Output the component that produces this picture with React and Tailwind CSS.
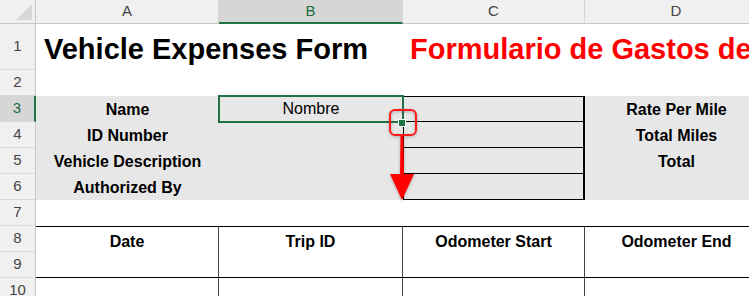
import React from 'react'

const LEFT = ['Name', 'ID Number', 'Vehicle Description', 'Authorized By']
const RIGHT = ['Rate Per Mile', 'Total Miles', 'Total', '']
const COLS = ['A', 'B', 'C', 'D']
const TABLE = ['Date', 'Trip ID', 'Odometer Start', 'Odometer End']

function RowHead({ n, row, active }) {
  return (
    <div
      className={`col-start-1 ${row} flex items-center justify-center border-b border-[#d9d9d9] text-[15px] ${
        active ? 'bg-[#d6d6d6] text-[#1e6b41] border-r-2 border-r-[#217346]' : 'bg-[#f0f0f0] text-[#444] border-r border-r-[#c8c8c8]'
      }`}
    >
      {n}
    </div>
  )
}

export default function App() {
  const rowClasses = ['row-start-2', 'row-start-3', 'row-start-4', 'row-start-5', 'row-start-6', 'row-start-7', 'row-start-8', 'row-start-9', 'row-start-10', 'row-start-11']
  const colClasses = ['col-start-2', 'col-start-3', 'col-start-4', 'col-start-5']
  return (
    <div className="relative w-[749px] h-[296px] overflow-hidden bg-white font-['Liberation_Sans',Arial,sans-serif] text-black">
      <div className="grid grid-cols-[36px_183px_184px_182px_183px] grid-rows-[24px_46px_26px_26px_26px_26px_26px_26px_26px_26px_26px]">
        {/* corner */}
        <div className="col-start-1 row-start-1 relative bg-[#f0f0f0] border-r border-b border-[#c8c8c8]">
          <svg className="absolute right-[3px] bottom-[3px]" width="16" height="16" viewBox="0 0 16 16">
            <polygon points="16,0 16,16 0,16" fill="#d8d8d8" />
          </svg>
        </div>
        {/* column headers */}
        {COLS.map((c, i) => (
          <div
            key={c}
            className={`${colClasses[i]} row-start-1 flex items-center justify-center text-[15px] border-r border-r-[#d4d4d4] ${
              c === 'B' ? 'bg-[#d6d6d6] text-[#1e6b41] border-b-2 border-b-[#217346]' : 'bg-[#f0f0f0] text-[#444] border-b border-b-[#c8c8c8]'
            }`}
          >
            {c}
          </div>
        ))}

        {/* row headers */}
        {[1, 2, 3, 4, 5, 6, 7, 8, 9, 10].map((n, i) => (
          <RowHead key={n} n={n} row={rowClasses[i]} active={n === 3} />
        ))}

        {/* row 1: titles */}
        <div className="col-start-2 row-start-2 flex items-end pl-[8px] pb-[6px] whitespace-nowrap text-[29px] font-bold leading-none">
          Vehicle Expenses Form
        </div>
        <div className="col-start-4 col-span-2 row-start-2 flex items-end pl-[7px] pb-[6px] whitespace-nowrap text-[29px] font-bold leading-none text-[#ff0000]">
          Formulario de Gastos de Vehículo
        </div>

        {/* rows 3-6: info block */}
        {LEFT.map((label, i) => (
          <React.Fragment key={label}>
            <div className={`col-start-2 ${rowClasses[i + 2]} bg-[#e7e7e7] flex items-center justify-center pt-[1px] text-[16px] font-bold`}>
              {label}
            </div>
            <div className={`col-start-3 ${rowClasses[i + 2]} bg-[#e7e7e7] flex items-center justify-center text-[16px]`}>
              {i === 0 ? 'Nombre' : ''}
            </div>
            <div
              className={`col-start-4 ${rowClasses[i + 2]} bg-[#e7e7e7] border-l border-r-2 border-b border-black ${i === 0 ? 'border-t' : ''}`}
            />
            <div className={`col-start-5 ${rowClasses[i + 2]} bg-[#e7e7e7] flex items-center justify-center pt-[1px] text-[16px] font-bold`}>
              {RIGHT[i]}
            </div>
          </React.Fragment>
        ))}

        {/* rows 8-9: table header */}
        {TABLE.map((t, i) => (
          <div
            key={t}
            className={`${colClasses[i]} row-start-9 row-span-2 border-t border-t-black border-b border-b-black ${
              i < 3 ? 'border-r border-r-[#444]' : ''
            } flex justify-center pt-[3px] text-[16px] font-bold`}
          >
            {t}
          </div>
        ))}
        {/* row 10 */}
        {TABLE.map((t, i) => (
          <div key={t + '-r'} className={`${colClasses[i]} row-start-11 ${i < 3 ? 'border-r border-r-[#444]' : ''}`} />
        ))}
      </div>

      {/* selection on B3 */}
      <div className="absolute left-[218px] top-[95px] w-[186px] h-[28px] border-2 border-[#217346] pointer-events-none" />
      <div className="absolute left-[398px] top-[119px] w-[8px] h-[8px] bg-[#217346] border border-white" />

      {/* red callout */}
      <svg className="absolute left-[384px] top-[104px]" width="40" height="102" viewBox="0 0 40 102">
        <defs>
          <filter id="sh" x="-50%" y="-50%" width="200%" height="200%">
            <feDropShadow dx="0" dy="1" stdDeviation="1.5" floodColor="#000" floodOpacity="0.3" />
          </filter>
        </defs>
        <rect x="6" y="6" width="26" height="25" rx="5" fill="none" stroke="#ff1a1a" strokeWidth="2" filter="url(#sh)" />
        <g filter="url(#sh)">
          <polygon points="16.5,32 19.5,32 20,72 16,72" fill="#ff0000" />
          <polygon points="6,70 30,70 18,96" fill="#ff0000" />
        </g>
      </svg>
    </div>
  )
}
